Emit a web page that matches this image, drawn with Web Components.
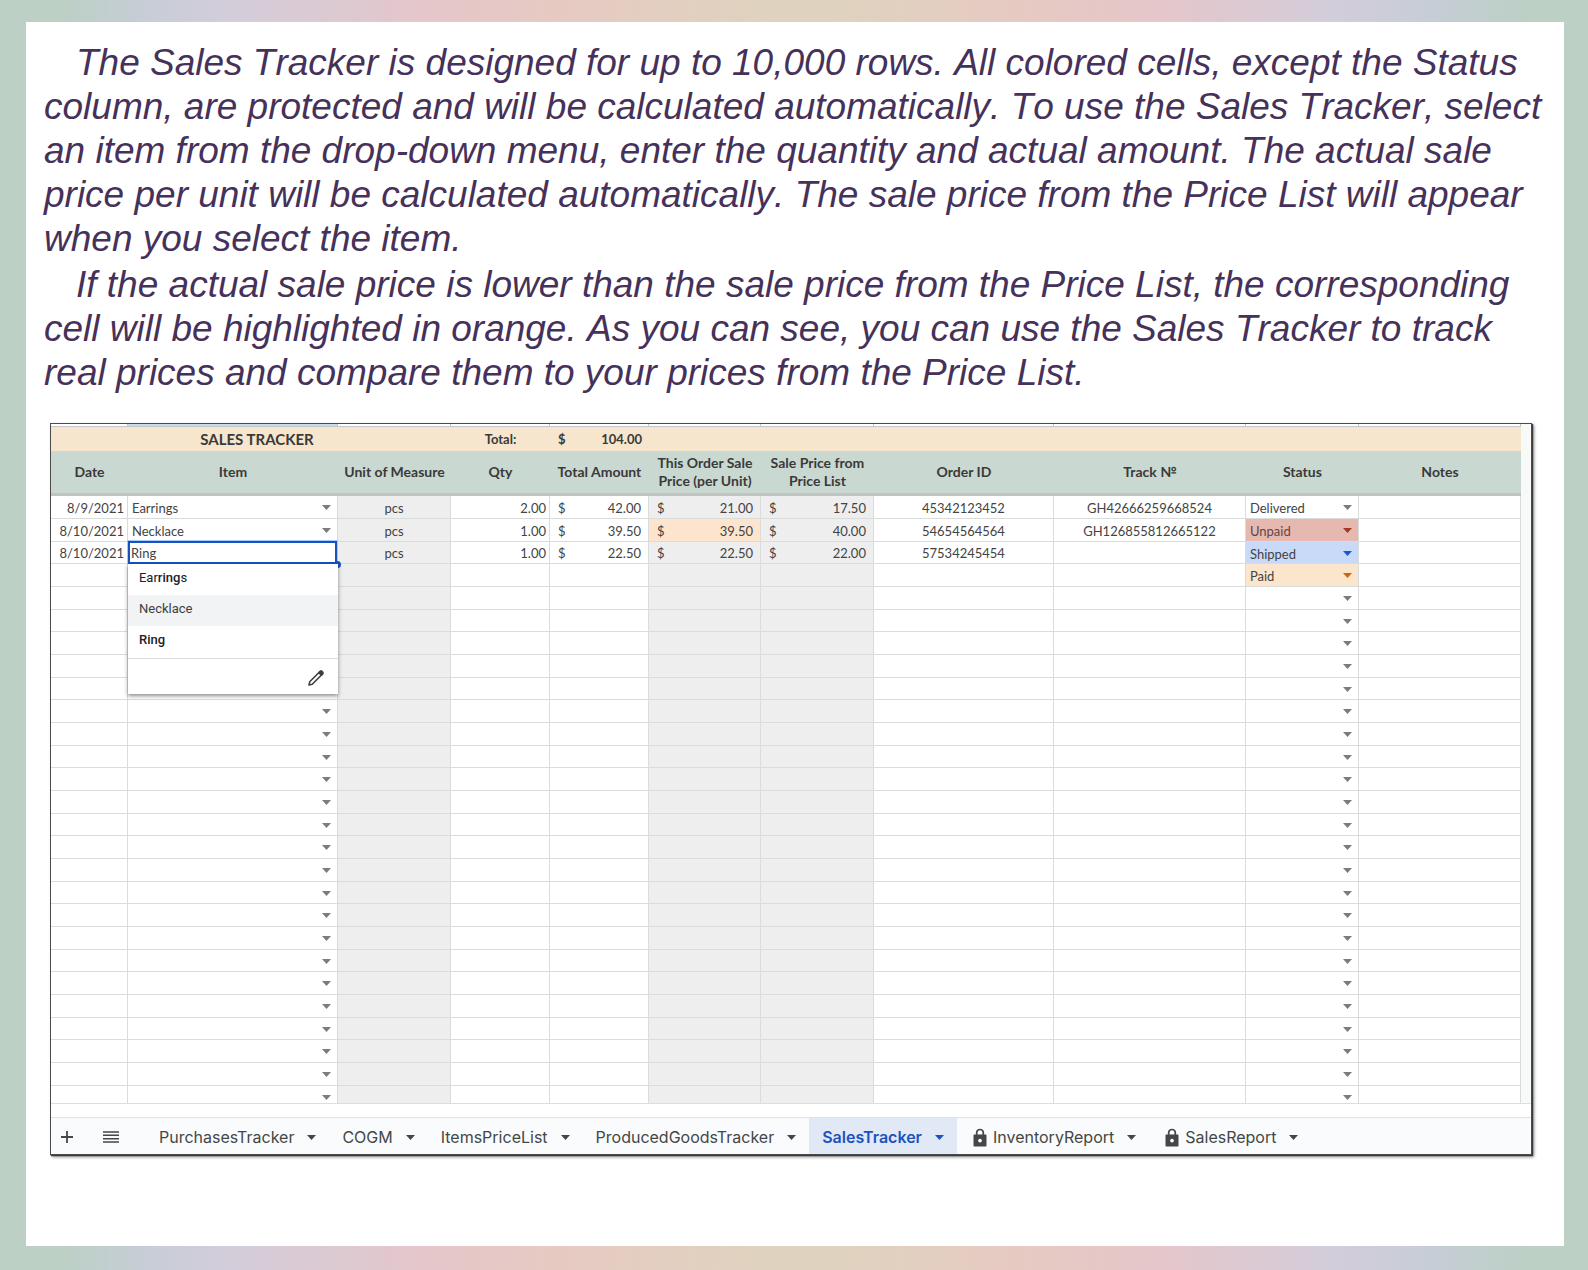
<!DOCTYPE html>
<html lang="en">
<head>
<meta charset="utf-8">
<title>Sales Tracker</title>
<style>
  body { margin: 0; }
</style>
</head>
<body>
<tracker-page>
  <intro-copy slot="intro">
    <p>The Sales Tracker is designed for up to 10,000 rows. All colored cells, except the Status column, are protected and will be calculated automatically. To use the Sales Tracker, select an item from the drop-down menu, enter the quantity and actual amount. The actual sale price per unit will be calculated automatically. The sale price from the Price List will appear when you select the item.</p>
    <p>If the actual sale price is lower than the sale price from the Price List, the corresponding cell will be highlighted in orange. As you can see, you can use the Sales Tracker to track real prices and compare them to your prices from the Price List.</p>
  </intro-copy>
  <sheet-window>
    <sheet-grid></sheet-grid>
    <sheet-tabs slot="tabs">
      <sheet-tab>PurchasesTracker</sheet-tab>
      <sheet-tab>COGM</sheet-tab>
      <sheet-tab>ItemsPriceList</sheet-tab>
      <sheet-tab>ProducedGoodsTracker</sheet-tab>
      <sheet-tab active>SalesTracker</sheet-tab>
      <sheet-tab locked>InventoryReport</sheet-tab>
      <sheet-tab locked>SalesReport</sheet-tab>
    </sheet-tabs>
  </sheet-window>
</tracker-page>

<script>
class BaseElement extends HTMLElement {
  connectedCallback() {
    if (this.shadowRoot) return;
    this.attachShadow({ mode: 'open' }).innerHTML = this.render();
  }
}

class TrackerPage extends BaseElement {
  render() {
    return `<style>
      :host {
        display: flex; box-sizing: border-box; min-height: 100vh;
        padding: 22px 24px 24px 26px;
        background: linear-gradient(90deg, #bcd0c6 4%, #c7cdd6 9%, #d2cdda 14%, #e5c6ca 27%, #e6cac2 35%, #dfd3bf 49%, #dfd3bf 52%, #e6cac2 64%, #e5c6ca 73%, #d2cdda 84%, #c7cdd6 90%, #bcd0c6 96%);
      }
      main {
        flex: 1; min-width: 0; background: #fff;
        box-shadow: -26px 0 0 #bcd0c6, 24px 0 0 #bcd0c6;
        padding: 19px 0 0;
      }
      .sheet { padding: 0 32px 0 24px; }
    </style>
    <main><slot name="intro"></slot><div class="sheet"><slot></slot></div></main>`;
  }
}

class IntroCopy extends BaseElement {
  render() {
    return `<style>
      :host {
        display: flex; flex-direction: column; gap: 2px;
        padding: 0 10px 28px 18px;
        font: italic 37px/44px "Liberation Sans", Arial, sans-serif;
        font-kerning: none;
        color: #45315a;
      }
      ::slotted(p) { margin: 0; text-indent: 32px; }
    </style><slot></slot>`;
  }
}

class SheetWindow extends BaseElement {
  render() {
    return `<style>
      :host {
        display: block; background: #fff; border: 1px solid #4c4c4c;
        box-shadow: 1px 1px 1px #3a3a3a, 2px 2px 3px #8a8a8a;
      }
      .pane { display: flex; background: #f8faf9; border-bottom: 1px solid #dcdfdf; }
      .pane ::slotted(*) { flex: 1; min-width: 0; margin-right: 10px; }
      .scroll { height: 13px; }
    </style>
    <div class="pane"><slot></slot></div><div class="scroll"></div><slot name="tabs"></slot>`;
  }
}

/* Drop-down cell: native select with a small triangle at its right edge. */
class CellSelect extends BaseElement {
  render() {
    const value = this.getAttribute('value') || '';
    const choices = (this.getAttribute('choices') || '').split(',');
    const options = ['', ...choices].map(c => `<option${c === value ? ' selected' : ''}>${c}</option>`).join('');
    return `<style>
      :host { display: grid; height: 22px; align-items: start; }
      select, svg { grid-area: 1 / 1; }
      select {
        appearance: none; width: 100%; height: 22px; margin: 0; padding: 2px 20px 0 4px;
        border: 0; background: none; color: inherit; font: inherit; outline: 0;
      }
      svg { justify-self: end; width: 9px; height: 5px; margin: 9px 6px 0 0; fill: var(--caret, #7c7c7c); pointer-events: none; }
    </style>
    <select aria-label="${this.getAttribute('label')}">${options}</select>
    <svg viewBox="0 0 9 5"><path d="M0 0h9L4.500 5z"/></svg>`;
  }
}

/* Cell in edit mode, with the suggestion list open under it. */
class ItemEditor extends BaseElement {
  render() {
    return `<style>
      :host { position: absolute; inset: -1px 0 -1px 0; z-index: 2; }
      input {
        box-sizing: border-box; width: 100%; height: 100%; margin: 0; padding: 0 1px;
        display: block; border: 2px solid #1652be; outline: 0; background: #fff;
        box-shadow: 0 0 0 1px #a8c7fa; font: inherit; color: inherit;
      }
      .handle { position: absolute; right: -4px; bottom: -4px; width: 7px; height: 7px; border-radius: 50%; background: #1652be; }
      .menu {
        position: absolute; top: 100%; left: 0; right: -1px; background: #fff;
        box-shadow: 0 2px 4px rgba(0,0,0,.45);
        font: 13px/20px Roboto, sans-serif; color: #202124;
      }
      ul { list-style: none; margin: 0; padding: 0 0 1px; border-bottom: 1px solid #dadce0; }
      li button {
        display: block; width: 100%; height: 31px; padding: 0 11px 4px; border: 0; background: none;
        font: inherit; color: inherit; text-align: left;
      }
      li button.hover { background: #f1f3f4; color: #3c4043; }
      b { font-weight: 500; }
      .foot { display: flex; justify-content: flex-end; align-items: center; height: 35px; padding: 0 13px; }
      .foot button { display: flex; padding: 2px 0 0; border: 0; background: none; }
      svg { width: 18px; height: 18px; fill: none; stroke: #3c4043; stroke-width: 1.6; stroke-linejoin: round; }
    </style>
    <span class="handle"></span>
    <input type="text" value="Ring" aria-label="Item">
    <div class="menu">
      <ul>
        <li><button type="button">Ear<b>ring</b>s</button></li>
        <li><button type="button" class="hover">Necklace</button></li>
        <li><button type="button"><b>Ring</b></button></li>
      </ul>
      <div class="foot"><button type="button" aria-label="Edit list">
        <svg viewBox="0 0 18 18"><path d="M2 16l.7-3.2L12.500 3l2.500 2.500-9.800 9.800z"/><path d="M11.900 3.600l1.500-1.500q.6-.5 1.200 0l1.300 1.300q.5.6 0 1.200l-1.500 1.500z" fill="#3c4043"/></svg>
      </button></div>
    </div>`;
  }
}

class SheetGrid extends BaseElement {
  render() {
    const ITEMS = 'Earrings,Necklace,Ring';
    const STATES = 'Delivered,Unpaid,Shipped,Paid';
    const rows = [
      ['8/9/2021', 'Earrings', 'pcs', '2.00', '42.00', '21.00', '17.50', '45342123452', 'GH42666259668524', 'Delivered'],
      ['8/10/2021', 'Necklace', 'pcs', '1.00', '39.50', '39.50', '40.00', '54654564564', 'GH126855812665122', 'Unpaid'],
      ['8/10/2021', 'Ring', 'pcs', '1.00', '22.50', '22.50', '22.00', '57534245454', '', 'Shipped'],
      ['', '', '', '', '', '', '', '', '', 'Paid'],
    ];
    while (rows.length < 27) rows.push(Array(10).fill(''));
    const money = v => v ? `<div class="money"><span>$</span><span>${v}</span></div>` : '';
    const body = rows.map((r, i) => `<tr>
      <td class="right">${r[0]}</td>
      <td class="pick">${i === 2 ? '<item-editor></item-editor>' : `<cell-select label="Item" choices="${ITEMS}" value="${r[1]}"></cell-select>`}</td>
      <td class="calc mid">${r[2]}</td>
      <td class="right">${r[3]}</td>
      <td>${money(r[4])}</td>
      <td class="calc${i === 1 ? ' low' : ''}">${money(r[5])}</td>
      <td class="calc">${money(r[6])}</td>
      <td class="mid">${r[7]}</td>
      <td class="mid">${r[8]}</td>
      <td class="pick ${r[9].toLowerCase()}"><cell-select label="Status" choices="${STATES}" value="${r[9]}"></cell-select></td>
      <td></td></tr>`).join('');
    const cols = [77, 210, 113, 99, 99, 112, 113, 180, 192, 113, 162]
      .map(w => `<col style="width:${(w / 14.7).toFixed(3)}%">`).join('');
    return `<style>
      :host { display: block; font: 13px/18px Lato, Carlito, sans-serif; color: #434343; }
      table { width: 100%; table-layout: fixed; border-collapse: separate; border-spacing: 0; background: #fff; }
      td, th { box-sizing: border-box; padding: 0; }
      .edge td { height: 3px; border-right: 1px solid #c4c7c8; border-bottom: 1px solid #c4c7c8; }
      .edge td:nth-child(2) { background: #c9d9ee; }
      .title th { height: 24px; background: #f5e6cd; color: #3a3a3a; }
      .title .name { font-size: 15px; padding-left: 12px; }
      .head th { height: 45px; background: #c9d8d0; border-bottom: 3px solid #c0c3c1; color: #3a3a3a; font-size: 14px; }
      tbody td {
        height: 23px; padding-top: 2px; line-height: 20px; vertical-align: top; white-space: nowrap;
        border-right: 1px solid #dadcdb; border-bottom: 1px solid #dadcdb;
      }
      tbody tr:nth-child(3n) td { height: 22px; line-height: 19px; }
      tbody tr:last-child td { height: 17px; line-height: 14px; border-bottom: 0; }
      tbody td.pick { position: relative; padding: 0; line-height: 20px; }
      cell-select { height: 21px; }
      tr:last-child cell-select { height: 17px; overflow: hidden; }
      .right { text-align: right; padding-right: 3px; }
      .mid { text-align: center; }
      .calc { background: #eee; }
      .calc.low { background: #fde5cd; }
      .money { display: flex; justify-content: space-between; padding: 0 7px 0 8px; }
      .unpaid { background: #e6b8af; color: #5e4643; --caret: #a3382a; }
      .shipped { background: #c9daf8; --caret: #1c57cf; }
      .paid { background: #fce5cd; --caret: #c8690f; }
    </style>
    <table>
      <colgroup>${cols}</colgroup>
      <thead>
        <tr class="edge" aria-hidden="true">${'<td></td>'.repeat(11)}</tr>
        <tr class="title"><th colspan="3" class="name">SALES TRACKER</th><th>Total:</th><th><div class="money"><span>$</span><span>104.00</span></div></th><th colspan="6"></th></tr>
        <tr class="head"><th>Date</th><th>Item</th><th>Unit of Measure</th><th>Qty</th><th>Total Amount</th><th>This Order Sale<br>Price (per Unit)</th><th>Sale Price from<br>Price List</th><th>Order ID</th><th>Track №</th><th>Status</th><th>Notes</th></tr>
      </thead>
      <tbody>${body}</tbody>
    </table>`;
  }
}

class SheetTabs extends BaseElement {
  render() {
    return `<style>
      :host { display: flex; height: 36px; background: #f9fbfd; border-top: 1px solid #dfe2e2; }
      .tools { display: flex; align-items: center; gap: 30px; padding: 2px 27px 0 10px; }
      .tools button { display: flex; padding: 0; border: 0; background: none; }
      svg { stroke: #444746; fill: none; }
      nav { display: flex; }
    </style>
    <div class="tools">
      <button type="button" aria-label="Add sheet"><svg width="12" height="12" viewBox="0 0 12 12" stroke-width="1.800"><path d="M6 0v12M0 6h12"/></svg></button>
      <button type="button" aria-label="All sheets"><svg width="16" height="12" viewBox="0 0 16 12" stroke-width="1.500"><path d="M0 1h16M0 4.300h16M0 7.700h16M0 11h16"/></svg></button>
    </div>
    <nav aria-label="Sheets"><slot></slot></nav>`;
  }
}

class SheetTab extends BaseElement {
  render() {
    const lock = this.hasAttribute('locked')
      ? '<svg class="lock" viewBox="0 0 14 19"><path d="M3.700 7V4.800a3.300 3.300 0 0 1 6.600 0V7" fill="none" stroke="currentColor" stroke-width="1.700"/><path fill="currentColor" fill-rule="evenodd" d="M1.300 6.500h11.400q.8 0 .8.8v10.400q0 .8-.8.8H1.300q-.8 0-.8-.8V7.300q0-.8.8-.8zM7 10.700a1.900 1.900 0 1 0 .01 0z"/></svg>' : '';
    return `<style>
      :host { display: flex; color: #444746; }
      :host([active]) { background: #e1e9f7; color: #1a53c0; --weight: 600; }
      button {
        display: flex; align-items: center; padding: 2px 13px 0; border: 0; background: none; color: inherit;
        font: var(--weight, 400) 16px/20px Inter, sans-serif;
      }
      :host([locked]) button { padding-left: 16px; }
      .lock { width: 14px; height: 19px; margin-right: 6px; }
      .caret { width: 9px; height: 5px; margin-left: 13px; fill: currentColor; }
    </style>
    <button type="button">${lock}<slot></slot><svg class="caret" viewBox="0 0 9 5"><path d="M0 0h9L4.500 5z"/></svg></button>`;
  }
}

customElements.define('tracker-page', TrackerPage);
customElements.define('intro-copy', IntroCopy);
customElements.define('sheet-window', SheetWindow);
customElements.define('cell-select', CellSelect);
customElements.define('item-editor', ItemEditor);
customElements.define('sheet-grid', SheetGrid);
customElements.define('sheet-tabs', SheetTabs);
customElements.define('sheet-tab', SheetTab);
</script>
</body>
</html>
